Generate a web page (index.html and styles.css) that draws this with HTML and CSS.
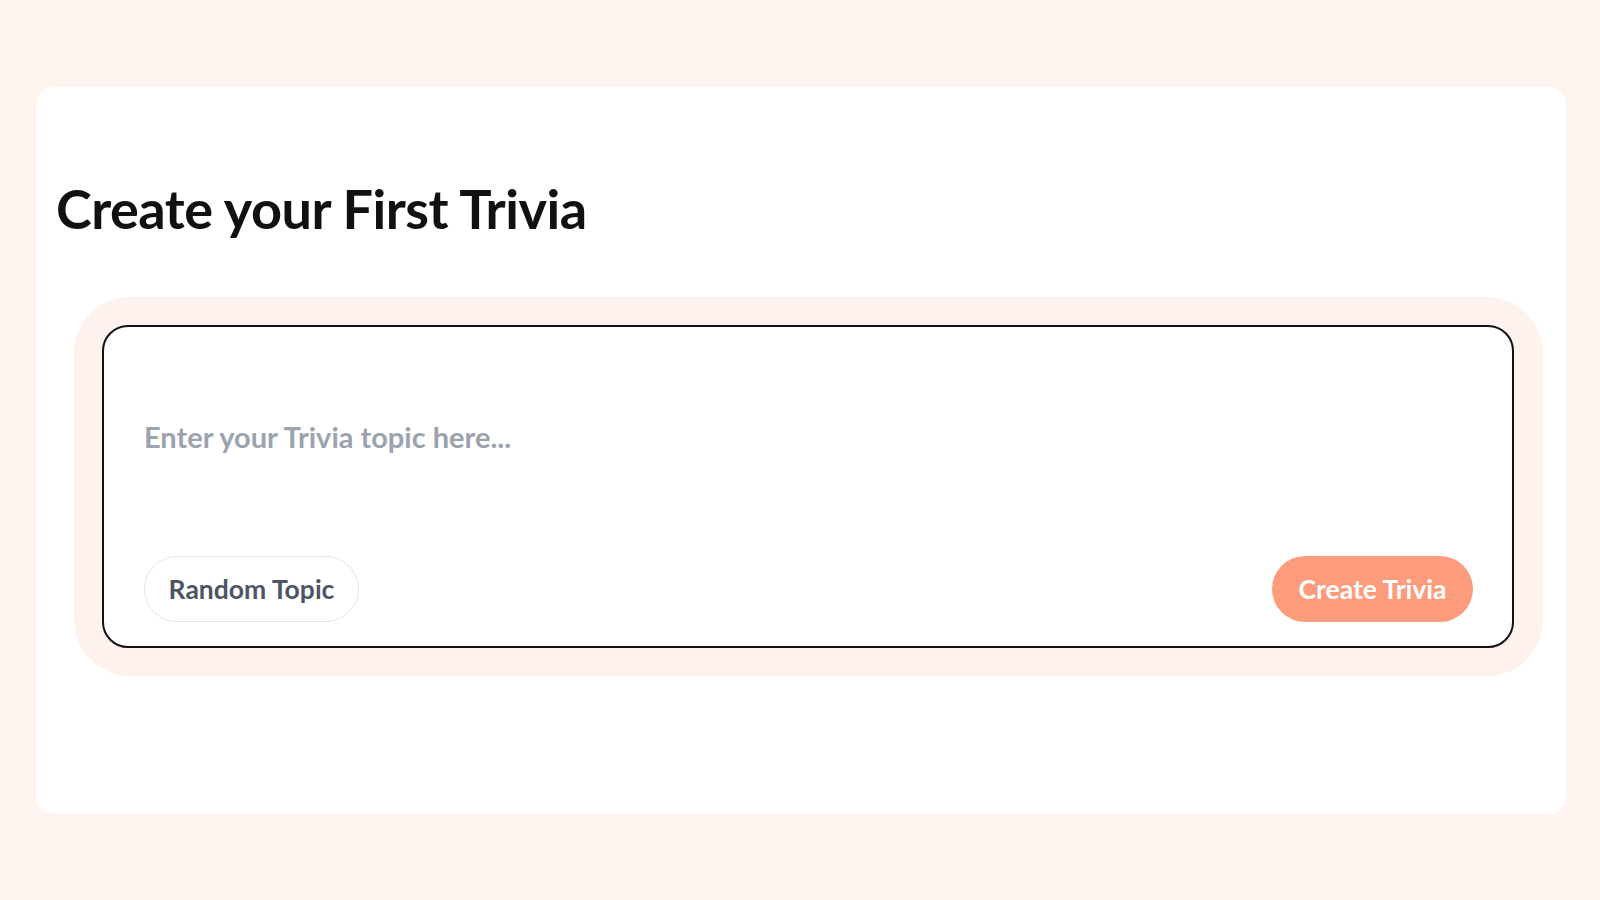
FILE: index.html
```html
<!DOCTYPE html>
<html lang="en">
<head>
<meta charset="utf-8">
<title>Create your First Trivia</title>
<link rel="stylesheet" href="styles.css">
</head>
<body>
<main class="card">
  <h1 class="title">Create your First Trivia</h1>
  <section class="composer">
    <div class="box">
      <textarea class="topic" placeholder="Enter your Trivia topic here..."></textarea>
      <div class="actions">
        <button class="btn btn-outline" type="button">Random Topic</button>
        <button class="btn btn-primary" type="button">Create Trivia</button>
      </div>
    </div>
  </section>
</main>
</body>
</html>
```
FILE: styles.css
```css
* { box-sizing: border-box; }
html, body {
  margin: 0;
  height: 100%;
}
body {
  background: #fdf4ef;
  font-family: "Lato", "Noto Sans", "Liberation Sans", sans-serif;
  padding: 87px 34px 0 36px;
}
.card {
  background: #ffffff;
  border-radius: 18px;
  height: 727px;
  padding: 90px 24px 0 20px;
}
.title {
  margin: 0 0 56px 0;
  font-size: 54px;
  line-height: 64px;
  font-weight: 700;
  color: #111111;
  letter-spacing: -0.5px;
}
.composer {
  margin-left: 18px;
  margin-right: -1px;
  background: #fdf2ed;
  border-radius: 56px;
  padding: 28px 29px 28px 28px;
}
.box {
  border: 2px solid #111111;
  border-radius: 26px;
  background: #ffffff;
  height: 323px;
  padding: 90px 39px 24px 40px;
  display: flex;
  flex-direction: column;
}
.topic {
  flex: 1;
  border: 0;
  outline: 0;
  resize: none;
  padding: 0;
  margin: 0;
  font-family: inherit;
  font-size: 29px;
  font-weight: 700;
  line-height: 40px;
  color: #374151;
  background: transparent;
}
.topic::placeholder {
  color: #9ca3af;
  opacity: 1;
}
.actions {
  display: flex;
  justify-content: space-between;
  align-items: center;
}
.btn {
  font-family: inherit;
  font-size: 26.5px;
  font-weight: 700;
  height: 66px;
  border-radius: 33px;
  cursor: pointer;
  padding: 0;
}
.btn-outline {
  width: 215px;
  background: #ffffff;
  border: 1px solid #e5e7eb;
  color: #4b5563;
}
.btn-primary {
  width: 201px;
  background: #fd9b7d;
  border: 0;
  color: #ffffff;
}
```
